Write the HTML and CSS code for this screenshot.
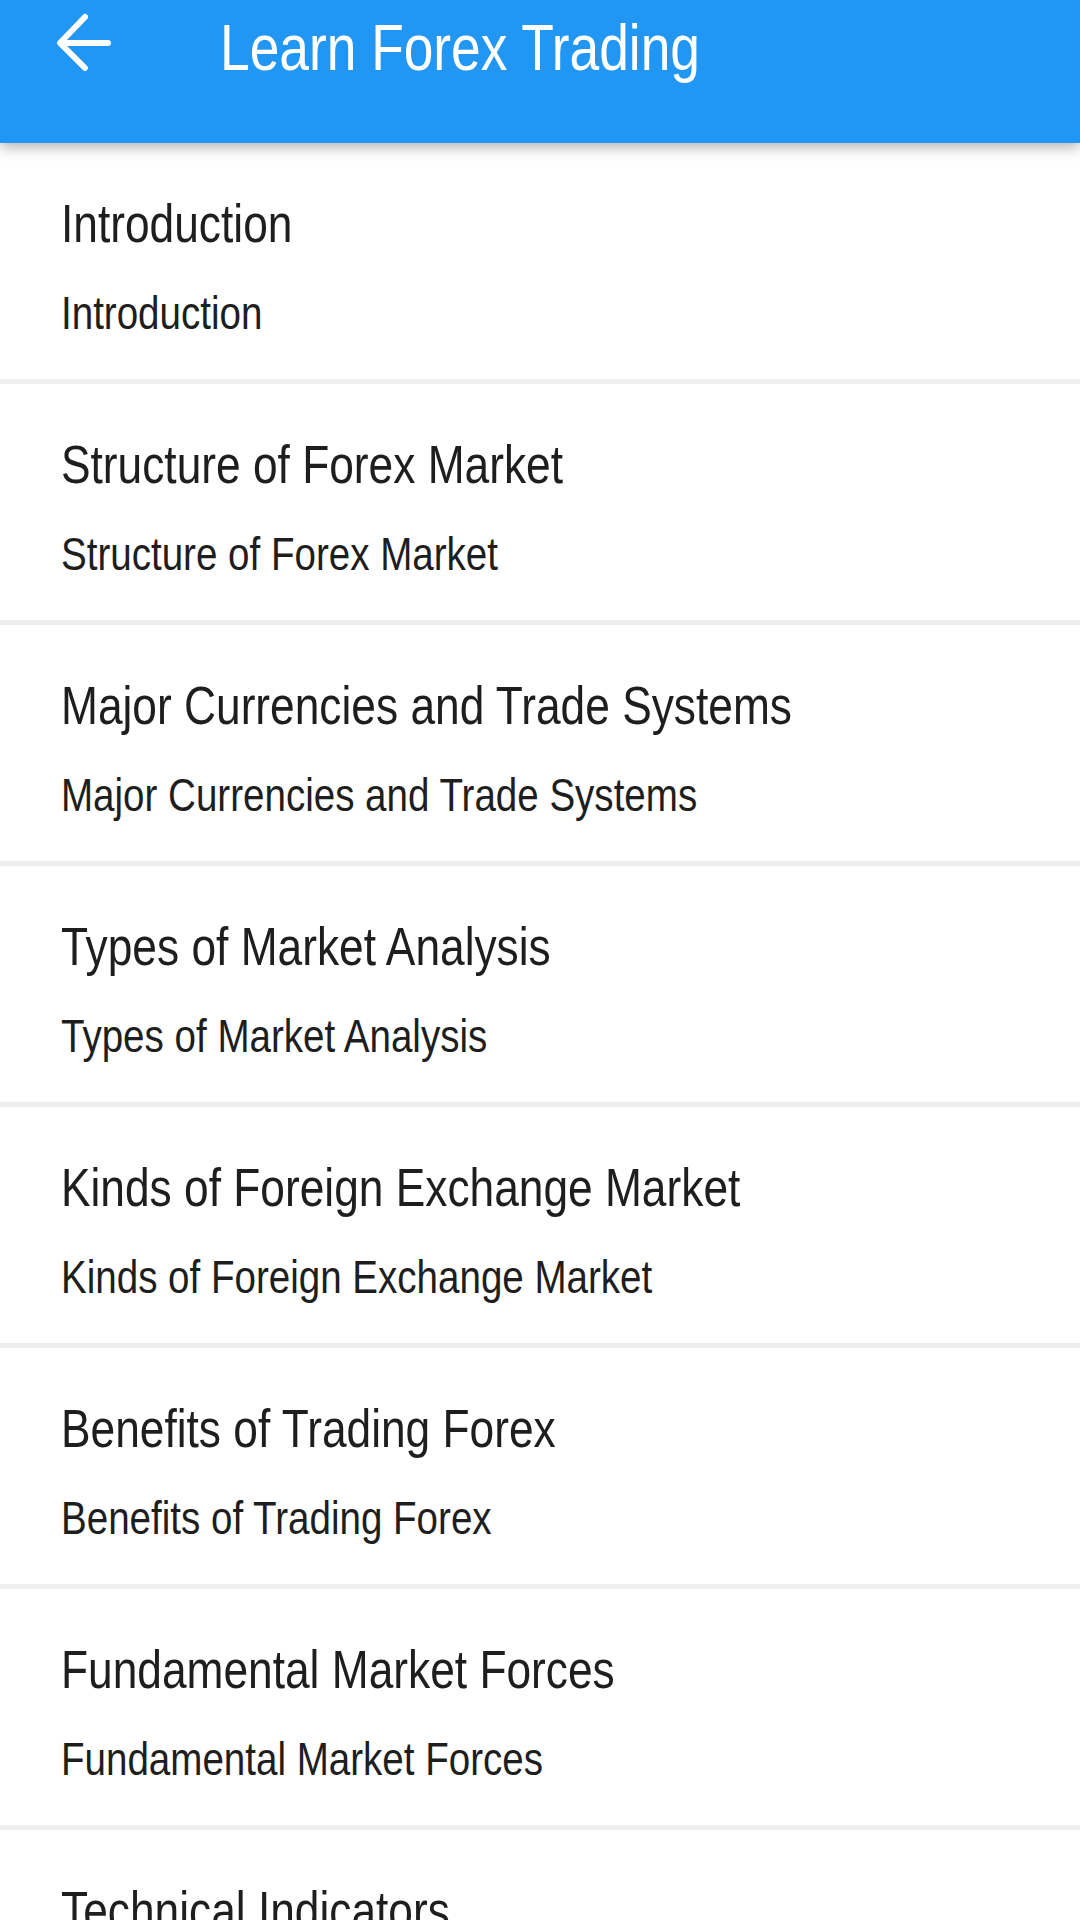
FILE: index.html
```html
<!DOCTYPE html>
<html lang="en">
<head>
<meta charset="utf-8">
<title>Learn Forex Trading</title>
<link rel="stylesheet" href="styles.css">
</head>
<body>
<div class="app">
  <header class="appbar">
    <svg class="back" width="56" height="66" viewBox="0 0 56 66" aria-hidden="true">
      <path d="M52 33 H6 M29 7 L4 33 L29 58" fill="none" stroke="#ffffff" stroke-width="6" stroke-linecap="round" stroke-linejoin="round"/>
    </svg>
    <h1 class="appbar-title"><span class="narrow">Learn Forex Trading</span></h1>
  </header>
  <ul class="list">
    <li class="item"><div class="item-title"><span class="narrow">Introduction</span></div><div class="item-sub"><span class="narrow">Introduction</span></div></li>
    <li class="item"><div class="item-title"><span class="narrow">Structure of Forex Market</span></div><div class="item-sub"><span class="narrow">Structure of Forex Market</span></div></li>
    <li class="item"><div class="item-title"><span class="narrow">Major Currencies and Trade Systems</span></div><div class="item-sub"><span class="narrow">Major Currencies and Trade Systems</span></div></li>
    <li class="item"><div class="item-title"><span class="narrow">Types of Market Analysis</span></div><div class="item-sub"><span class="narrow">Types of Market Analysis</span></div></li>
    <li class="item"><div class="item-title"><span class="narrow">Kinds of Foreign Exchange Market</span></div><div class="item-sub"><span class="narrow">Kinds of Foreign Exchange Market</span></div></li>
    <li class="item"><div class="item-title"><span class="narrow">Benefits of Trading Forex</span></div><div class="item-sub"><span class="narrow">Benefits of Trading Forex</span></div></li>
    <li class="item"><div class="item-title"><span class="narrow">Fundamental Market Forces</span></div><div class="item-sub"><span class="narrow">Fundamental Market Forces</span></div></li>
    <li class="item"><div class="item-title"><span class="narrow">Technical Indicators</span></div><div class="item-sub"><span class="narrow">Technical Indicators</span></div></li>
  </ul>
</div>
</body>
</html>
```

FILE: styles.css
```css
html, body {
  margin: 0;
  padding: 0;
  background: #ffffff;
}

body {
  width: 1080px;
  height: 1920px;
  overflow: hidden;
  font-family: "Liberation Sans", Arial, sans-serif;
}

.app {
  width: 1080px;
}

.narrow {
  display: inline-block;
  transform: scaleX(0.82);
  transform-origin: 0 50%;
}

.appbar {
  position: relative;
  z-index: 2;
  height: 143px;
  background: #2196f3;
  display: flex;
  align-items: flex-start;
  box-shadow: 0 5px 12px rgba(0, 0, 0, 0.28);
}

.back {
  display: block;
  margin: 10px 0 0 56px;
  flex: none;
}

.appbar-title {
  margin: 15px 0 0 108px;
  font-size: 65px;
  line-height: 65px;
  font-weight: normal;
  color: #ffffff;
  white-space: nowrap;
}

.list {
  list-style: none;
  margin: 0;
  padding: 0;
}

.item {
  box-sizing: content-box;
  height: 188px;
  padding: 48px 0 0 61px;
  border-bottom: 5px solid #eeeeee;
  color: #1e1e1e;
}

.item-title {
  font-size: 54px;
  line-height: 64px;
  white-space: nowrap;
}

.item-sub {
  margin-top: 29px;
  font-size: 47px;
  line-height: 57px;
  white-space: nowrap;
}
```
